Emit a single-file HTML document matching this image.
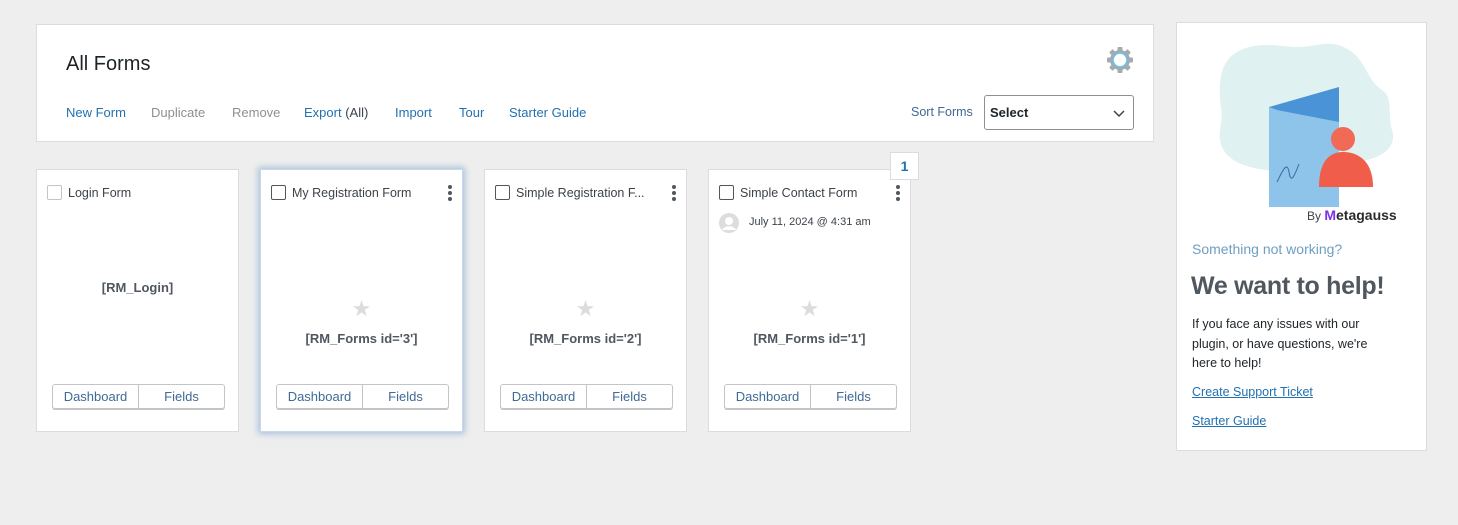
<!DOCTYPE html>
<html><head><meta charset="utf-8"><style>
*{box-sizing:border-box;margin:0;padding:0}
body{width:1458px;height:525px;background:#eeeeee;font-family:"Liberation Sans",sans-serif;position:relative;overflow:hidden;color:#1d2327}
.abs{position:absolute}
.top{left:36px;top:24px;width:1118px;height:118px;background:#fff;border:1px solid #dcdcde}
.top h1{position:absolute;left:29px;top:28px;font-size:20px;font-weight:400;color:#1d2327}
.nav{position:absolute;top:80px;font-size:13px;color:#2271b1}
.card{position:absolute;top:169px;width:203px;height:263px;background:#fff;border:1px solid #dcdcde}
.card.sel{box-shadow:0 0 6px 2px rgba(114,160,205,.55);border-color:#c9d8e8}
.cb{position:absolute;left:10px;top:15px;width:15px;height:15px;border:1.5px solid #50575e;border-radius:2px}
.title{position:absolute;left:31px;top:16px;font-size:12.5px;color:#3c434a}
.dots{position:absolute;right:10px;top:15px;width:4px}
.dots i{display:block;width:4px;height:4px;border-radius:50%;background:#50575e;margin-bottom:2px}
.sc{position:absolute;left:0;width:100%;text-align:center;font-size:13px;font-weight:700;color:#50575e}
.star{position:absolute;left:0;width:100%;text-align:center;font-size:22px;color:#dcdcde}
.btns{position:absolute;left:15px;top:214px;width:173px;height:25px;border:1px solid #c3c4c7;border-radius:3px;display:flex;font-size:13px;color:#3e6a95;box-shadow:0 1px 0 #c3c4c7}
.btns span{flex:1;text-align:center;line-height:23px}
.btns span:first-child{border-right:1px solid #c3c4c7;flex:0 0 86px}
.side{left:1176px;top:22px;width:251px;height:429px;background:#fff;border:1px solid #dcdcde}
</style></head><body>
<div class="abs top">
<h1>All Forms</h1>
<div class="nav" style="left:29px">New Form</div>
<div class="nav" style="left:114px;color:#8c8f94">Duplicate</div>
<div class="nav" style="left:195px;color:#8c8f94">Remove</div>
<div class="nav" style="left:267px">Export <span style="color:#3c434a">(All)</span></div>
<div class="nav" style="left:358px">Import</div>
<div class="nav" style="left:422px">Tour</div>
<div class="nav" style="left:472px">Starter Guide</div>
<div class="nav" style="left:874px;top:80px;font-size:12.5px;color:#3e6a95">Sort Forms</div>
<div style="position:absolute;left:947px;top:70px;width:150px;height:35px;border:1px solid #8c8f94;border-radius:3px;font-size:13px;font-weight:700;padding:9px 5px">Select
<svg style="position:absolute;right:8px;top:14px" width="12" height="8" viewBox="0 0 12 8"><path d="M1 1l5 5 5-5" stroke="#3c434a" stroke-width="1.5" fill="none"/></svg></div>
<svg style="position:absolute;left:1069px;top:21px" width="28" height="28" viewBox="0 0 28 28"><g fill="#a7aaad"><circle cx="14" cy="14" r="10"/><rect x="11.5" y="1" width="5" height="26" rx="1"/><rect x="11.5" y="1" width="5" height="26" rx="1" transform="rotate(45 14 14)"/><rect x="11.5" y="1" width="5" height="26" rx="1" transform="rotate(90 14 14)"/><rect x="11.5" y="1" width="5" height="26" rx="1" transform="rotate(135 14 14)"/></g><circle cx="14" cy="14" r="7" fill="#fff" stroke="#62c0ee" stroke-width="1.5"/></svg>
</div>

<div class="card" style="left:36px"><div class="cb" style="border-color:#c3c4c7"></div><div class="title">Login Form</div><div class="sc" style="top:110px">[RM_Login]</div><div class="btns"><span>Dashboard</span><span>Fields</span></div></div>
<div class="card sel" style="left:260px"><div class="cb"></div><div class="title">My Registration Form</div><div class="dots"><i></i><i></i><i></i></div><div class="star" style="top:126px">★</div><div class="sc" style="top:161px">[RM_Forms id='3']</div><div class="btns"><span>Dashboard</span><span>Fields</span></div></div>
<div class="card" style="left:484px"><div class="cb"></div><div class="title">Simple Registration F...</div><div class="dots"><i></i><i></i><i></i></div><div class="star" style="top:126px">★</div><div class="sc" style="top:161px">[RM_Forms id='2']</div><div class="btns"><span>Dashboard</span><span>Fields</span></div></div>
<div class="card" style="left:708px"><div class="cb"></div><div class="title">Simple Contact Form</div><div class="dots"><i></i><i></i><i></i></div>
<svg style="position:absolute;left:10px;top:43px" width="20" height="20" viewBox="0 0 20 20"><circle cx="10" cy="10" r="10" fill="#ddd"/><circle cx="10" cy="8" r="4" fill="#fff"/><path d="M3 17c2-5 12-5 14 0" fill="#fff"/></svg>
<div style="position:absolute;left:40px;top:46px;font-size:11px;color:#3c434a">July 11, 2024 @ 4:31 am</div>
<div class="star" style="top:126px">★</div><div class="sc" style="top:161px">[RM_Forms id='1']</div><div class="btns"><span>Dashboard</span><span>Fields</span></div></div>
<div class="abs" style="left:890px;top:152px;width:29px;height:28px;background:#fff;border:1px solid #dcdcde;color:#2271b1;font-weight:700;font-size:14px;text-align:center;line-height:26px">1</div>

<div class="abs side">
<svg style="position:absolute;left:20px;top:14px" width="215" height="175" viewBox="0 0 215 175"><path d="M40 15c20-12 45-5 60-5 22 0 35-10 55 5 15 12 15 28 30 38 12 8 5 25 10 40 5 16-8 26-25 30-20 6-45 14-80 12-35-2-60-8-66-28-4-15 3-22 0-37-3-20-2-45 16-55z" fill="#dff1f1"/><path d="M72 70h70v100H72z" fill="#8ec3ea"/><path d="M72 70l70-20v35l-62-12z" fill="#4a93d6"/><circle cx="146" cy="102" r="12" fill="#f06a55"/><path d="M122 150c0-25 10-35 24-35s30 8 30 35z" fill="#f05d4a"/><path d="M80 145c5-10 10-22 12-10s5 5 10-8" stroke="#3a6aa0" fill="none"/></svg>
<div style="position:absolute;left:130px;top:184px;font-size:12px;color:#3c434a">By <b style="color:#2b2b2b;font-size:14px"><span style="color:#7b2ff0">M</span>etagauss</b></div>
<div style="position:absolute;left:15px;top:218px;font-size:14px;color:#6e9ec3">Something not working?</div>
<div style="position:absolute;left:14px;top:249px;font-size:25px;font-weight:700;color:#50575e;letter-spacing:-0.3px">We want to help!</div>
<div style="position:absolute;left:15px;top:292px;width:200px;font-size:12.5px;line-height:19.5px;color:#1d2327">If you face any issues with our plugin, or have questions, we're here to help!</div>
<div style="position:absolute;left:15px;top:362px;font-size:12.5px;color:#2271b1;text-decoration:underline">Create Support Ticket</div>
<div style="position:absolute;left:15px;top:391px;font-size:12.5px;color:#2271b1;text-decoration:underline">Starter Guide</div>
</div>
</body></html>
